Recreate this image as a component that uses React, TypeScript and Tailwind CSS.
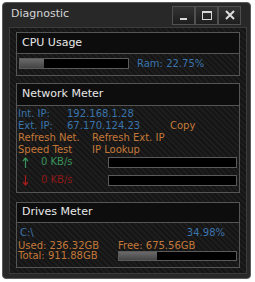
import React from "react";

const hatch =
  "bg-[repeating-linear-gradient(45deg,#151515_0px,#151515_2px,#1d1d1d_2px,#1d1d1d_4px)]";

function TitleButton({ children }: { children: React.ReactNode }) {
  return (
    <div className="flex h-[19px] w-[23px] items-center justify-center border border-[#505050] bg-[linear-gradient(#333,#1e1e1e)]">
      {children}
    </div>
  );
}

function SectionHeader({ title, h }: { title: string; h: string }) {
  return (
    <div
      className={`flex ${h} items-center border-b border-[#555] bg-[#0d0d0d] pl-[5px] text-[11px] text-[#e8e8e8]`}
    >
      {title}
    </div>
  );
}

function Bar({ w, h, fill }: { w: string; h: string; fill?: string }) {
  return (
    <div className={`${w} ${h} border border-[#5a5a5a] bg-black`}>
      {fill ? (
        <div className={`${fill} h-full bg-[linear-gradient(#6a6a6a,#444)]`} />
      ) : null}
    </div>
  );
}

export default function App() {
  return (
    <div
      className="h-[282px] w-[255px] bg-white pl-[2px] pt-[2px]"
      style={{ fontFamily: '"DejaVu Sans", Verdana, sans-serif' }}
    >
      <div className="flex h-[277px] w-[249px] flex-col rounded-[4px] border border-[#5a5a5a] bg-[#282828]">
        <div className="flex h-[24px] items-center justify-between pl-[8px] pr-[9px]">
          <span className="pb-[1px] text-[11px] text-[#d6d6d6]">Diagnostic</span>
          <div className="flex">
            <TitleButton>
              <div className="mt-[8px] h-[2px] w-[7px] bg-[#d8d8d8]" />
            </TitleButton>
            <TitleButton>
              <div className="h-[9px] w-[10px] border-[1.5px] border-t-[2px] border-[#d8d8d8]" />
            </TitleButton>
            <TitleButton>
              <svg width="10" height="10" viewBox="0 0 10 10">
                <path d="M1 1L9 9M9 1L1 9" stroke="#dedede" strokeWidth="2" />
              </svg>
            </TitleButton>
          </div>
        </div>

        <div
          className={`ml-[6px] h-[247px] w-[238px] border border-[#3c3c3c] ${hatch} px-[6px] pt-[4px] text-[10px]`}
        >
          {/* CPU */}
          <div className="w-[224px] border border-[#555]">
            <SectionHeader title="CPU Usage" h="h-[21px]" />
            <div className="flex h-[21px] items-start pl-[2px] pt-[4px]">
              <Bar w="w-[110px]" h="h-[11px]" fill="w-[24px]" />
              <span className="ml-[8px] leading-[11px] text-[#3a74ac]">Ram: 22.75%</span>
            </div>
          </div>

          {/* Network */}
          <div className="mt-[7px] w-[224px] border border-[#555]">
            <SectionHeader title="Network Meter" h="h-[22px]" />
            <div className="h-[86px] pl-[1px] pt-[2px] leading-[12px]">
              <div className="flex h-[12px] text-[#3a74ac]">
                <span className="w-[49px]">Int. IP:</span>
                <span>192.168.1.28</span>
              </div>
              <div className="flex h-[12px]">
                <span className="w-[49px] text-[#3a74ac]">Ext. IP:</span>
                <span className="w-[103px] text-[#3a74ac]">67.170.124.23</span>
                <span className="text-[#c47838]">Copy</span>
              </div>
              <div className="flex h-[12px] text-[#c47838]">
                <span className="w-[74px]">Refresh Net.</span>
                <span>Refresh Ext. IP</span>
              </div>
              <div className="flex h-[12px] text-[#c47838]">
                <span className="w-[74px]">Speed Test</span>
                <span>IP Lookup</span>
              </div>
              <div className="flex h-[12px] items-center">
                <div className="flex w-[90px] items-center pl-[4px] text-[#3a945a]">
                  <svg width="7" height="11" viewBox="0 0 7 11" className="mr-[12px]">
                    <path d="M3.5 1V11M1 4L3.5 1L6 4" stroke="#3a945a" strokeWidth="1.2" fill="none" />
                  </svg>
                  <span>0 KB/s</span>
                </div>
                <Bar w="w-[129px]" h="h-[11px]" />
              </div>
              <div className="mt-[6px] flex h-[12px] items-center">
                <div className="flex w-[90px] items-center pl-[4px] text-[#8e1a1a]">
                  <svg width="7" height="11" viewBox="0 0 7 11" className="mr-[12px]">
                    <path d="M3.5 0V10M1 7L3.5 10L6 7" stroke="#a81c1c" strokeWidth="1.2" fill="none" />
                  </svg>
                  <span>0 KB/s</span>
                </div>
                <Bar w="w-[129px]" h="h-[11px]" />
              </div>
            </div>
          </div>

          {/* Drives */}
          <div className="mt-[9px] w-[224px] border border-[#555]">
            <SectionHeader title="Drives Meter" h="h-[20px]" />
            <div className="h-[44px] pl-[1px] pt-[3px]">
              <div className="flex h-[13px] items-center justify-between pl-[2px] pr-[14px] text-[#3a74ac]">
                <span>C:\</span>
                <span>34.98%</span>
              </div>
              <div className="mt-[2px] flex h-[10px] items-center leading-[10px] text-[#c47838]">
                <span className="w-[100px]">Used: 236.32GB</span>
                <span>Free: 675.56GB</span>
              </div>
              <div className="flex h-[10px] items-center leading-[10px] text-[#c47838]">
                <span className="w-[100px]">Total: 911.88GB</span>
                <Bar w="w-[119px]" h="h-[10px]" fill="w-[38px]" />
              </div>
            </div>
          </div>
        </div>
      </div>
    </div>
  );
}
